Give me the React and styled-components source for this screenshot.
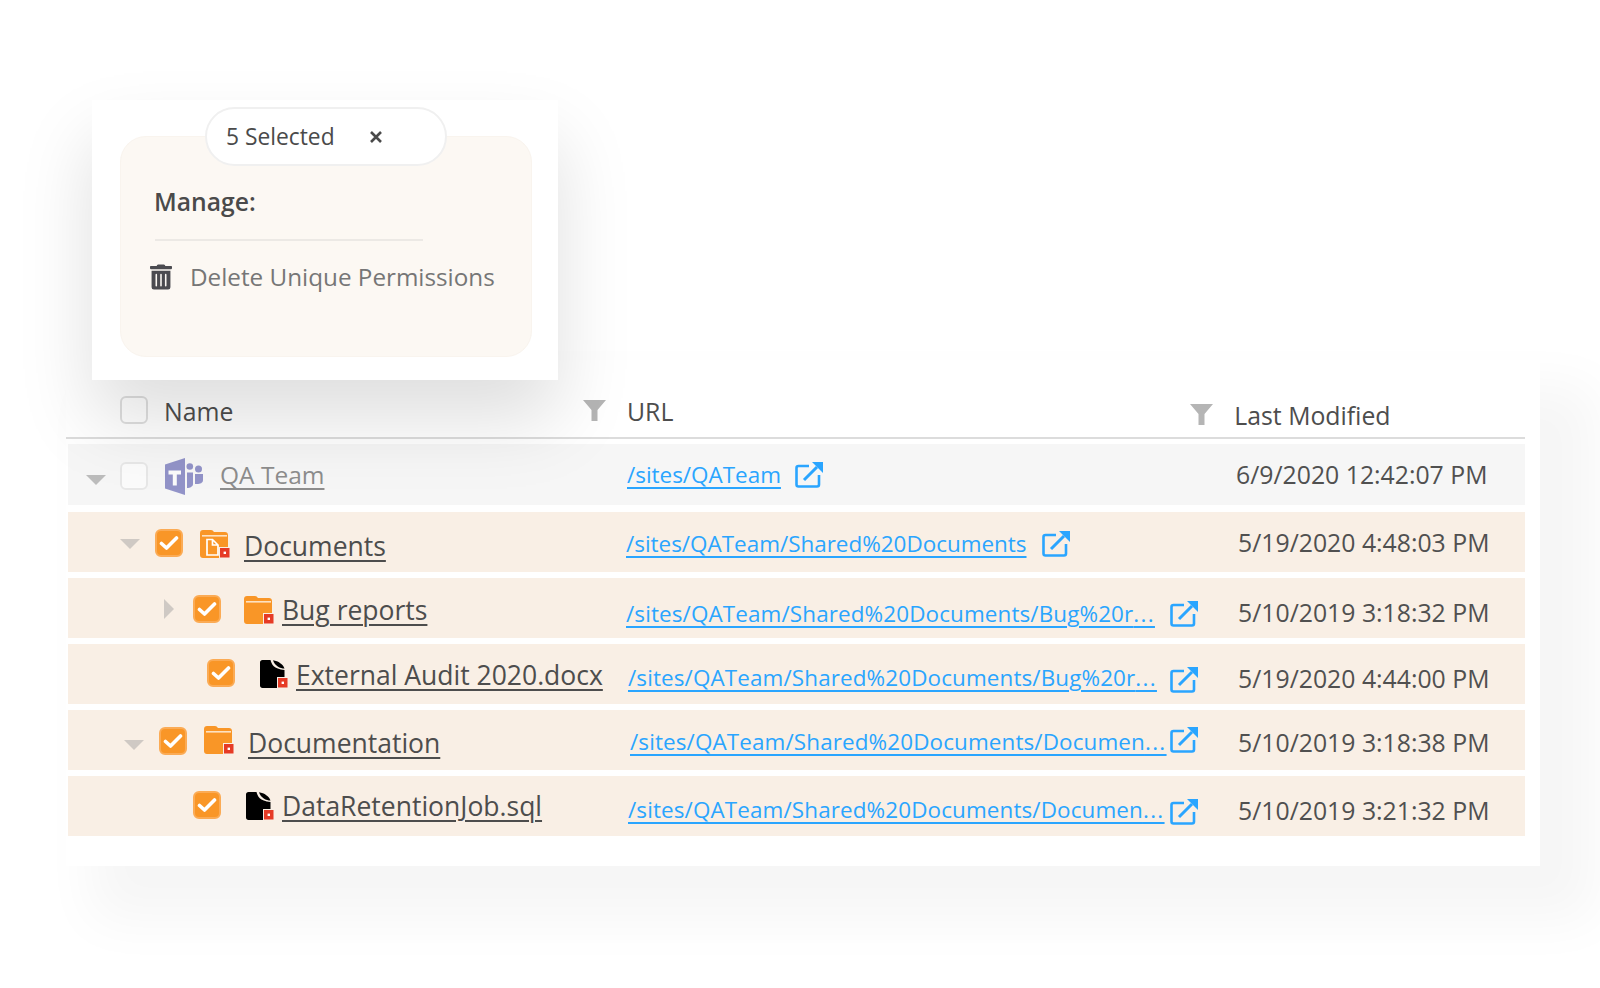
import React from 'react'
import styled, { createGlobalStyle } from 'styled-components'
import { FaTrashAlt } from 'react-icons/fa'

const GlobalStyle = createGlobalStyle`
  html, body {
    margin: 0;
    padding: 0;
    background: #fff;
    font-family: "Open Sans", "Noto Sans", sans-serif;
    color: #4d4d4d;
  }
`

const Page = styled.div`
  position: relative;
  width: 1600px;
  height: 988px;
  overflow: hidden;
  padding: 360px 0 0 66px;
  box-sizing: border-box;
  background: #fff;
`

const Panel = styled.div`
  width: 1474px;
  height: 506px;
  background: #fff;
  box-shadow: 40px 40px 50px 15px rgba(0, 0, 0, 0.04);
`

const Popup = styled.div`
  position: absolute;
  left: 92px;
  top: 100px;
  width: 466px;
  height: 280px;
  padding: 36px 0 0 28px;
  box-sizing: border-box;
  background: #fff;
  box-shadow: 0 40px 70px rgba(0, 0, 0, 0.13);
  z-index: 2;
`

const Cream = styled.div`
  position: relative;
  width: 412px;
  height: 221px;
  border-radius: 26px;
  background: #fcf8f3;
  border: 1px solid #f9f4ee;
  padding: 51px 0 0 34px;
  box-sizing: border-box;
`

const Badge = styled.div`
  position: absolute;
  left: 84px;
  top: -30px;
  width: 242px;
  height: 59px;
  box-sizing: border-box;
  display: flex;
  align-items: center;
  padding-left: 19px;
  background: #fff;
  border: 2px solid #f0f0f0;
  border-radius: 30px;
  font-size: 22.8px;
  color: #4a4a4a;
`

const CloseMark = styled.span`
  display: flex;
  margin-left: 34px;
`

const ManageTitle = styled.div`
  margin-left: -1px;
  font-size: 24.7px;
  line-height: 28px;
  font-weight: 600;
  color: #4a4a4a;
`

const Divider = styled.div`
  width: 268px;
  height: 2px;
  margin-top: 23px;
  background: #ece9e5;
`

const ActionRow = styled.div`
  display: flex;
  align-items: center;
  margin: 18px 0 0 -5px;
  font-size: 24.25px;
  line-height: 36px;
  color: #767676;
`

const TrashIcon = styled(FaTrashAlt)`
  width: 22px;
  height: 28px;
  margin-right: 18px;
  color: #4b4b50;
`

const HeaderRow = styled.div`
  display: flex;
  align-items: flex-start;
  width: 1459px;
  height: 77px;
  border-bottom: 2px solid #dcdcdc;
  font-size: 24.8px;
  line-height: 34px;
  color: #4d4d4d;
`

const HeaderName = styled.div`
  display: flex;
  align-items: flex-start;
  width: 561px;
  padding: 34px 0 0 54px;
  box-sizing: border-box;
`

const HeaderNameText = styled.div`
  margin-left: 16px;
`

const HeaderFilter = styled.svg`
  flex: none;
  width: 23px;
  height: 21px;
  margin-top: ${p => p.$top}px;
  margin-left: ${p => p.$left}px;
  fill: #b5b5b5;
`

const HeaderLabel = styled.div`
  margin-top: ${p => p.$top}px;
  margin-left: ${p => p.$left}px;
  white-space: nowrap;
`

const Rows = styled.div`
  margin: 5px 0 0 2px;
  width: 1457px;
  display: flex;
  flex-direction: column;
  gap: 6px;
`

const Row = styled.div`
  display: flex;
  align-items: flex-start;
  height: ${p => (p.$muted ? 61 : 60)}px;
  margin-bottom: ${p => (p.$muted ? 1 : 0)}px;
  background: ${p => (p.$muted ? '#f6f6f6' : '#f9efe5')};
  font-size: 24.8px;
`

const NameCell = styled.div`
  flex: none;
  display: flex;
  align-items: flex-start;
  width: 556px;
  padding-left: ${p => p.$indent}px;
  box-sizing: border-box;
  opacity: ${p => (p.$muted ? 0.62 : 1)};
`

const Caret = styled.span`
  flex: none;
  width: 0;
  height: 0;
  margin-top: ${p => p.$top}px;
  ${p => p.$open
    ? `border-left: 10px solid transparent; border-right: 10px solid transparent; border-top: 10px solid ${p.$muted ? '#999' : '#cfc9c4'};`
    : 'border-top: 10px solid transparent; border-bottom: 10px solid transparent; border-left: 10px solid #cfc9c4;'}
`

const Checkbox = styled.span`
  flex: none;
  display: flex;
  align-items: center;
  justify-content: center;
  width: 28px;
  height: 28px;
  margin-top: ${p => p.$top}px;
  margin-left: ${p => p.$left}px;
  box-sizing: border-box;
  border-radius: 6px;
  background: ${p => (p.$checked ? '#f99627' : '#fff')};
  border: 2px solid ${p => (p.$checked ? '#fbab55' : '#dfdfdf')};
`

const ItemIcon = styled.svg`
  flex: none;
  margin-top: ${p => p.$top}px;
  margin-left: ${p => p.$left}px;
`

const ItemLink = styled.a`
  margin-left: ${p => p.$left}px;
  margin-top: ${p => p.$top}px;
  white-space: nowrap;
  font-size: ${p => (p.$muted ? 24.5 : 26.5)}px;
  line-height: 36px;
  color: inherit;
  text-decoration: underline;
  text-decoration-thickness: 2px;
  text-underline-offset: 4px;
`

const UrlCell = styled.div`
  flex: none;
  display: flex;
  align-items: flex-start;
  width: 612px;
  padding-left: ${p => p.$left}px;
  box-sizing: border-box;
`

const UrlBox = styled.div`
  flex: none;
  width: ${p => p.$width}px;
  margin-top: ${p => p.$top}px;
  white-space: nowrap;
  font-size: 22.45px;
  line-height: 34px;
`

const UrlLink = styled.a`
  letter-spacing: ${p => (p.$cut ? 0.12 : 0)}px;
  color: #2aa5ff;
  text-decoration: underline;
  text-decoration-thickness: 2px;
  text-underline-offset: 4px;
`

const Dots = styled.span`
  letter-spacing: 1.3px;
`

const ExternalIcon = styled.svg`
  flex: none;
  width: 28px;
  height: 26px;
  margin-top: ${p => p.$top}px;
  margin-left: ${p => p.$left}px;
`

const DateCell = styled.div`
  margin-top: ${p => p.$top}px;
  margin-left: ${p => p.$left}px;
  line-height: 36px;
  white-space: nowrap;
  color: #505050;
`

const Check = () => (
  <svg width="20" height="16" viewBox="0 0 20 16">
    <path d="M2.5 8.5 L7.5 13 L17.5 3" fill="none" stroke="#fff" strokeWidth="3.6" strokeLinecap="round" strokeLinejoin="round" />
  </svg>
)

const RedMark = () => (
  <>
    <rect x="19.5" y="17.5" width="10.5" height="10.5" fill="#e63b26" stroke="#f9efe5" strokeWidth="1" />
    <rect x="23.6" y="21.6" width="2.4" height="2.4" fill="#fff" />
  </>
)

const FolderIcon = ({ withDoc, top, left }) => (
  <ItemIcon $top={top} $left={left} width="30" height="28" viewBox="0 0 30 28">
    <path d="M3 0 H11 C12.5 0 13 .7 14 2 H25 C26.8 2 28 3.2 28 5 V25 C28 26.8 26.8 28 25 28 H3 C1.2 28 0 26.8 0 25 V3 C0 1.2 1.2 0 3 0 Z" fill="#f99627" />
    <rect x="2" y="5" width="25" height="1.6" fill="#fde2c2" />
    {withDoc && <path d="M7 9.5 H12.5 L18 15 V25 H7 Z M12.5 9.5 V15 H18" fill="none" stroke="#fff" strokeWidth="1.7" />}
    <RedMark />
  </ItemIcon>
)

const FileIcon = ({ top, left }) => (
  <ItemIcon $top={top} $left={left} width="28" height="28" viewBox="0 0 28 28">
    <path d="M2.5 0 H10.5 C11.5 4 13.5 9 24.5 10 V25 C24.5 27 23.5 28 22 28 H2.5 C1 28 0 27 0 25.5 V2.5 C0 1 1 0 2.5 0 Z" fill="#000" />
    <path d="M13 0.3 C18.5 1 23 4.5 24.5 8.6 C20 8.5 14.8 6 13 0.3 Z" fill="#000" />
    <rect x="17.5" y="17.5" width="10.5" height="10.5" fill="#e63b26" stroke="#f9efe5" strokeWidth="1" />
    <rect x="21.6" y="21.6" width="2.4" height="2.4" fill="#fff" />
  </ItemIcon>
)

const TeamsIcon = ({ top, left }) => (
  <ItemIcon $top={top} $left={left} width="38" height="37" viewBox="0 0 38 37">
    <path d="M0 6.5 L20 0 V37 L0 30.5 Z" fill="#5558ad" />
    <path d="M3.5 12.5 H16 V16.5 H11.8 V27.5 H7.8 V16.5 H3.5 Z" fill="#fff" />
    <circle cx="24.8" cy="8.5" r="3.3" fill="#5558ad" />
    <circle cx="33.5" cy="11" r="3.5" fill="#5558ad" />
    <path d="M22 14.5 H28 V26 C28 28.5 25 30 22 30 Z" fill="#5558ad" />
    <path d="M30 16 H38 V22 C38 25 35 26 32 26 L30 26 Z" fill="#5558ad" />
  </ItemIcon>
)

const FunnelPath = () => <path d="M0 0 H23 L14.5 10 V21 H8.5 V10 Z" />

const External = ({ top, left }) => (
  <ExternalIcon $top={top} $left={left} viewBox="0 0 28 26">
    <path d="M14 4 H3.5 C2.2 4 1.5 4.8 1.5 6 V22.5 C1.5 23.7 2.2 24.5 3.5 24.5 H22 C23.2 24.5 24 23.7 24 22.5 V13" fill="none" stroke="#2aa5ff" strokeWidth="2.6" />
    <path d="M17 0 H28 V11 Z" fill="#2aa5ff" />
    <path d="M9 18 L22 5" fill="none" stroke="#2aa5ff" strokeWidth="3" />
  </ExternalIcon>
)

const rows = [
  {
    muted: true, indent: 18, caret: { open: true, top: 31 }, check: { left: 14, top: 18 },
    icon: { kind: 'teams', left: 17, top: 14 }, name: 'QA Team', nameLeft: 17, nameTop: 13,
    url: '/sites/QATeam', urlLeft: 3, urlWidth: 160, urlTop: 14, extLeft: 8, extTop: 18,
    date: '6/9/2020 12:42:07 PM', dateLeft: 0, dateTop: 12,
  },
  {
    indent: 52, caret: { open: true, top: 27 }, check: { left: 15, top: 17 },
    icon: { kind: 'folderDoc', left: 17, top: 18 }, name: 'Documents', nameLeft: 14, nameTop: 16,
    url: '/sites/QATeam/Shared%20Documents', urlLeft: 2, urlWidth: 410, urlTop: 15, extLeft: 6, extTop: 19,
    date: '5/19/2020 4:48:03 PM', dateLeft: 2, dateTop: 12,
  },
  {
    indent: 96, caret: { top: 21 }, check: { left: 19, top: 17 },
    icon: { kind: 'folder', left: 23, top: 18 }, name: 'Bug reports', nameLeft: 8, nameTop: 14,
    url: '/sites/QATeam/Shared%20Documents/Bug%20r', cut: true, urlLeft: 2, urlWidth: 530, urlTop: 19, extLeft: 14, extTop: 23,
    date: '5/10/2019 3:18:32 PM', dateLeft: 2, dateTop: 16,
  },
  {
    indent: 139, check: { left: 0, top: 15 },
    icon: { kind: 'file', left: 25, top: 16 }, name: 'External Audit 2020.docx', nameLeft: 8, nameTop: 13,
    url: '/sites/QATeam/Shared%20Documents/Bug%20r', cut: true, urlLeft: 4, urlWidth: 530, urlTop: 17, extLeft: 12, extTop: 23,
    date: '5/19/2020 4:44:00 PM', dateLeft: 2, dateTop: 16,
  },
  {
    indent: 56, caret: { open: true, top: 30 }, check: { left: 15, top: 17 },
    icon: { kind: 'folder', left: 17, top: 16 }, name: 'Documentation', nameLeft: 14, nameTop: 15,
    url: '/sites/QATeam/Shared%20Documents/Documen', cut: true, urlLeft: 6, urlWidth: 536, urlTop: 15, extLeft: 4, extTop: 17,
    date: '5/10/2019 3:18:38 PM', dateLeft: 2, dateTop: 14,
  },
  {
    indent: 125, check: { left: 0, top: 15 },
    icon: { kind: 'file', left: 25, top: 16 }, name: 'DataRetentionJob.sql', nameLeft: 8, nameTop: 12,
    url: '/sites/QATeam/Shared%20Documents/Documen', cut: true, urlLeft: 4, urlWidth: 536, urlTop: 17, extLeft: 6, extTop: 23,
    date: '5/10/2019 3:21:32 PM', dateLeft: 2, dateTop: 16,
  },
]

const RowIcon = ({ kind, left, top }) => {
  if (kind === 'teams') return <TeamsIcon left={left} top={top} />
  if (kind === 'file') return <FileIcon left={left} top={top} />
  return <FolderIcon left={left} top={top} withDoc={kind === 'folderDoc'} />
}

const App = () => {
  return (
    <Page>
      <GlobalStyle />
      <Panel>
        <HeaderRow>
          <HeaderName>
            <Checkbox $left={0} $top={2} />
            <HeaderNameText>Name</HeaderNameText>
          </HeaderName>
          <HeaderFilter $top={40} $left={-44} viewBox="0 0 23 21"><FunnelPath /></HeaderFilter>
          <HeaderLabel $top={34} $left={21}>URL</HeaderLabel>
          <HeaderFilter $top={44} $left={517} viewBox="0 0 23 21"><FunnelPath /></HeaderFilter>
          <HeaderLabel $top={38} $left={21}>Last Modified</HeaderLabel>
        </HeaderRow>
        <Rows>
          {rows.map(row => (
            <Row key={row.name} $muted={row.muted}>
              <NameCell $indent={row.indent} $muted={row.muted}>
                {row.caret && <Caret $open={row.caret.open} $top={row.caret.top} $muted={row.muted} />}
                <Checkbox $checked={!row.muted} $left={row.check.left} $top={row.check.top}>
                  {!row.muted && <Check />}
                </Checkbox>
                <RowIcon {...row.icon} />
                <ItemLink $left={row.nameLeft} $top={row.nameTop} $muted={row.muted}>{row.name}</ItemLink>
              </NameCell>
              <UrlCell $left={row.urlLeft}>
                <UrlBox $width={row.urlWidth} $top={row.urlTop}>
                  <UrlLink $cut={row.cut}>{row.url}{row.cut && <Dots>...</Dots>}</UrlLink>
                </UrlBox>
                <External left={row.extLeft} top={row.extTop} />
              </UrlCell>
              <DateCell $left={row.dateLeft} $top={row.dateTop}>{row.date}</DateCell>
            </Row>
          ))}
        </Rows>
      </Panel>
      <Popup>
        <Cream>
          <Badge>
            5 Selected
            <CloseMark>
              <svg width="14" height="14" viewBox="0 0 14 14">
                <path d="M2 2 L12 12 M12 2 L2 12" stroke="#4a4a4a" strokeWidth="2.6" />
              </svg>
            </CloseMark>
          </Badge>
          <ManageTitle>Manage:</ManageTitle>
          <Divider />
          <ActionRow><TrashIcon />Delete Unique Permissions</ActionRow>
        </Cream>
      </Popup>
    </Page>
  )
}

export default App
